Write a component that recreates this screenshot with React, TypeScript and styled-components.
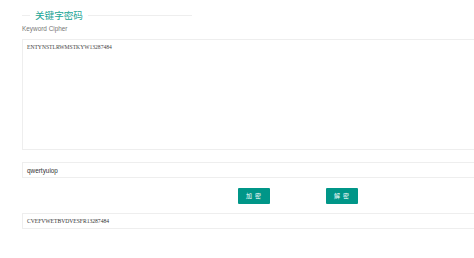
import React from "react";
import styled, { createGlobalStyle } from "styled-components";

const Global = createGlobalStyle`
  html, body { margin: 0; padding: 0; background: #fff; overflow: hidden; }
  body { font-family: "Liberation Sans", Arial, sans-serif; }
  * { box-sizing: border-box; }
`;

const Viewport = styled.div`
  width: 474px;
  height: 258px;
  overflow: hidden;
`;

const Page = styled.div`
  width: 600px;
  padding: 9px 0 0 22px;
  display: flex;
  flex-direction: column;
`;

const TitleRow = styled.div`
  width: 170px;
  height: 12px;
  display: flex;
  align-items: center;
  gap: 2px;
`;

const Rule = styled.div<{ $w?: number }>`
  height: 1px;
  background: #eeeeee;
  ${(p) => (p.$w ? `width: ${p.$w}px;` : "flex: 1;")}
`;

const Title = styled.span`
  font-family: "Noto Sans CJK SC", "Liberation Sans", sans-serif;
  font-size: 9.6px;
  line-height: 12px;
  color: #20a595;
  padding: 0 3px;
`;

const Label = styled.div`
  margin-top: 4px;
  font-size: 6.4px;
  line-height: 8px;
  color: #777;
`;

const Area = styled.div`
  margin-top: 6px;
  width: 551px;
  height: 111px;
  border: 1px solid #eeeeee;
  padding: 4px 4px;
  font-family: "Liberation Serif", "Times New Roman", serif;
  font-size: 5.6px;
  line-height: 7px;
  color: #444;
`;

const Field = styled.div<{ $serif?: boolean; $top?: number }>`
  width: 551px;
  height: 16px;
  margin-top: ${(p) => p.$top ?? 0}px;
  border: 1px solid #eeeeee;
  padding: 0 4px;
  display: flex;
  align-items: center;
  font-family: ${(p) =>
    p.$serif ? `"Liberation Serif", "Times New Roman", serif` : `"Liberation Sans", Arial, sans-serif`};
  font-size: ${(p) => (p.$serif ? "5.6px" : "6.4px")};
  color: #333;
`;

const ButtonRow = styled.div`
  width: 551px;
  margin-top: 10px;
  margin-bottom: 9px;
  display: flex;
  justify-content: center;
  gap: 56px;
`;

const Button = styled.button`
  width: 32px;
  height: 16px;
  border: none;
  border-radius: 1px;
  background: #009688;
  color: #fff;
  padding: 0;
  font-family: "Noto Sans CJK SC", sans-serif;
  font-size: 6px;
  letter-spacing: 3px;
  text-indent: 3px;
  line-height: 16px;
`;

export default function App() {
  return (
    <Viewport>
      <Global />
      <Page>
        <TitleRow>
          <Rule $w={8} />
          <Title>关键字密码</Title>
          <Rule />
        </TitleRow>
        <Label>Keyword Cipher</Label>
        <Area>ENTYNSTLRWMSTKYW13287484</Area>
        <Field $top={12}>qwertyuiop</Field>
        <ButtonRow>
          <Button>加密</Button>
          <Button>解密</Button>
        </ButtonRow>
        <Field $serif>CVEFVWETBVDVESFR13287484</Field>
      </Page>
    </Viewport>
  );
}
